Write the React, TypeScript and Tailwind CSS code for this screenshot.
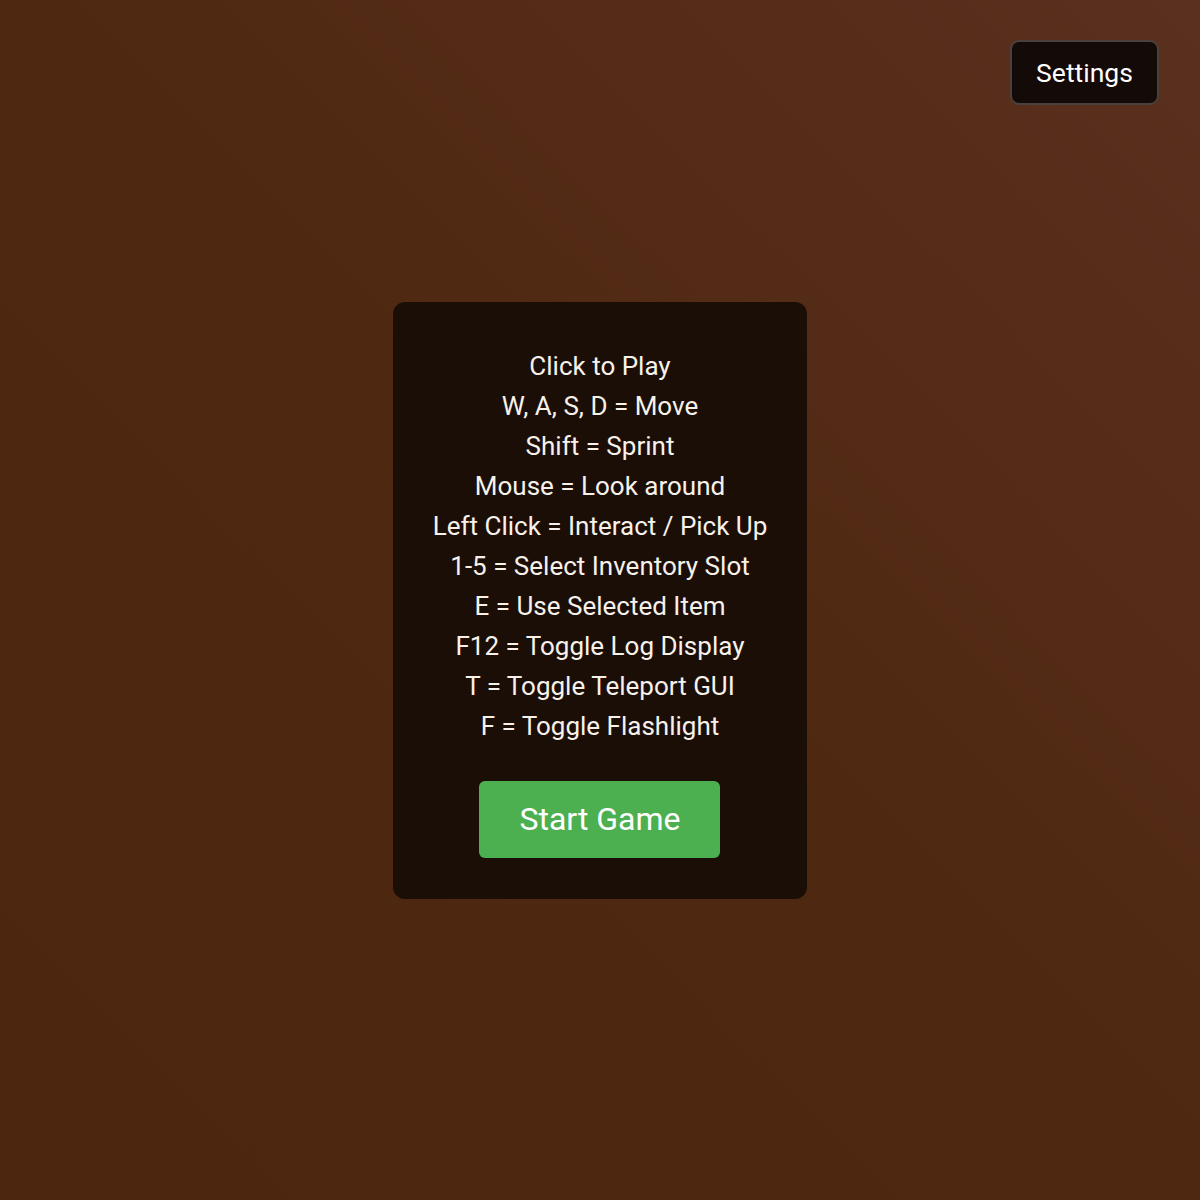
const lines = [
  "Click to Play",
  "W, A, S, D = Move",
  "Shift = Sprint",
  "Mouse = Look around",
  "Left Click = Interact / Pick Up",
  "1-5 = Select Inventory Slot",
  "E = Use Selected Item",
  "F12 = Toggle Log Display",
  "T = Toggle Teleport GUI",
  "F = Toggle Flashlight",
];

export default function App() {
  return (
    <div
      className="relative w-full h-[1200px] flex items-center justify-center bg-linear-to-bl from-[#5a301e] via-[#4f2811] to-[#4c260e] text-[#f7f1ea]"
      style={{ fontFamily: "Roboto, 'Noto Sans', sans-serif" }}
    >
      <button className="absolute top-[40px] right-[41px] w-[149px] h-[65px] flex items-center justify-center text-[26.5px] text-white bg-[#140a07] border-2 border-[#4a403c] rounded-[9px]">
        Settings
      </button>

      <div className="bg-[#1a0e07] rounded-[12px] px-[40px] pt-[44px] pb-[41px] flex flex-col items-center text-center">
        <div className="flex flex-col">
          {lines.map((line) => (
            <p key={line} className="text-[26px] leading-[40px] whitespace-nowrap">
              {line}
            </p>
          ))}
        </div>
        <button className="mt-[35px] w-[241px] h-[77px] bg-[#4caf50] rounded-[6px] text-[32px] text-white">
          Start Game
        </button>
      </div>
    </div>
  );
}
